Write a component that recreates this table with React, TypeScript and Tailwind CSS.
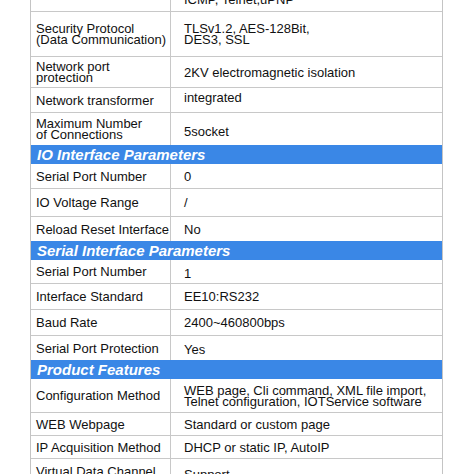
type Row = { label: string; value: string; h: number; vOff?: number; lOff?: number };
type Section = { title?: string; rows: Row[] };

const sections: Section[] = [
  {
    rows: [
      { label: "Security Protocol\n(Data Communication)", value: "TLSv1.2, AES-128Bit,\nDES3, SSL", h: 45 },
      { label: "Network port\nprotection", value: "2KV electromagnetic isolation", h: 31 },
      { label: "Network transformer", value: "integrated", h: 25, vOff: -3 },
      { label: "Maximum Number\nof Connections", value: "5socket", h: 32, vOff: 2 },
    ],
  },
  {
    title: "IO Interface Parameters",
    rows: [
      { label: "Serial Port Number", value: "0", h: 25 },
      { label: "IO Voltage Range", value: "/", h: 28 },
      { label: "Reload Reset Interface", value: "No", h: 24 },
    ],
  },
  {
    title: "Serial Interface Parameters",
    rows: [
      { label: "Serial Port Number", value: "1", h: 24, vOff: 2 },
      { label: "Interface Standard", value: "EE10:RS232", h: 26 },
      { label: "Baud Rate", value: "2400~460800bps", h: 26 },
      { label: "Serial Port Protection", value: "Yes", h: 24, vOff: 1 },
    ],
  },
  {
    title: "Product Features",
    rows: [
      { label: "Configuration Method", value: "WEB page, Cli command, XML file import,\nTelnet configuration, IOTService software", h: 34 },
      { label: "WEB Webpage", value: "Standard or custom page", h: 23 },
      { label: "IP Acquisition Method", value: "DHCP or static IP, AutoIP", h: 23 },
      { label: "Virtual Data Channel", value: "Support", h: 24, vOff: 3 },
    ],
  },
];

function Cell({ text, off = 0, className }: { text: string; off?: number; className: string }) {
  return (
    <div className={`flex items-center ${className}`}>
      <div className="whitespace-pre leading-[11px]" style={{ transform: `translateY(${off}px)` }}>
        {text}
      </div>
    </div>
  );
}

export default function App() {
  return (
    <div
      className="w-[474px] h-[474px] overflow-hidden bg-white text-[13px] text-[#111]"
      style={{ fontFamily: '"Liberation Sans", Arial, sans-serif' }}
    >
      <div className="ml-[30px] w-[413px] border-x border-[#c4c4c4]">
        <div className="flex h-[12px] overflow-hidden border-b border-[#c8c8c8]">
          <div className="w-[140px] border-r border-[#c8c8c8]" />
          <div className="pl-[13px] leading-[11px] mt-[-6px]">ICMP, Telnet,uPNP</div>
        </div>
        {sections.map((s, i) => (
          <div key={i}>
            {s.title && (
              <div className="h-[19px] bg-[#3a87e6] text-white font-bold italic text-[15px] leading-[19px] pl-[6px]">
                {s.title}
              </div>
            )}
            {s.rows.map((r, j) => (
              <div
                key={j}
                className={`flex ${j < s.rows.length - 1 ? "border-b border-[#c8c8c8]" : ""}`}
                style={{ height: r.h }}
              >
                <Cell text={r.label} off={r.lOff} className="w-[140px] shrink-0 pl-[5px] border-r border-[#c8c8c8] overflow-hidden" />
                <Cell text={r.value} off={r.vOff} className="pl-[13px]" />
              </div>
            ))}
          </div>
        ))}
      </div>
    </div>
  );
}
